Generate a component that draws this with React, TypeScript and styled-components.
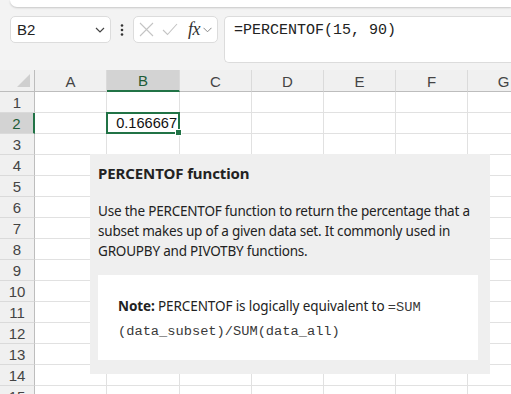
import React from "react";
import styled, { createGlobalStyle } from "styled-components";

const GlobalStyle = createGlobalStyle`
  html, body { margin: 0; padding: 0; background: #ffffff; }
  body { font-family: "Liberation Sans", Arial, sans-serif; }
`;

const GREEN = "#217346";
const COLS = ["A", "B", "C", "D", "E", "F", "G"];
const COL_W = [72, 73, 72, 72, 72, 72, 72];
const ROWS = Array.from({ length: 15 }, (_, i) => i + 1);

const Page = styled.div`
  position: relative;
  width: 511px;
  height: 394px;
  overflow: hidden;
  background: #f3f3f3;
`;

const TopStrip = styled.div`
  height: 7px;
  margin-left: 10px;
  background: #ffffff;
  border-bottom-left-radius: 7px;
  box-shadow: 0 1px 2px rgba(0, 0, 0, 0.18);
`;

const FormulaRow = styled.div`
  display: flex;
  align-items: flex-start;
  padding: 9px 0 0 10px;
  height: 63px;
  box-sizing: border-box;
`;

const NameBox = styled.div`
  box-sizing: border-box;
  width: 101px;
  height: 27px;
  background: #fff;
  border: 1px solid #dcdcdc;
  border-radius: 5px;
  display: flex;
  align-items: center;
  justify-content: space-between;
  padding: 0 5px 0 6px;
  font-size: 15px;
  color: #222;
`;

const Dots = styled.div`
  width: 22px;
  height: 27px;
  display: flex;
  align-items: center;
  justify-content: center;
`;

const FxBox = styled.div`
  box-sizing: border-box;
  width: 85px;
  height: 27px;
  background: #fff;
  border: 1px solid #dcdcdc;
  border-radius: 5px;
  display: flex;
  align-items: center;
  padding: 0 2px 0 5px;
  gap: 8px;
`;

const FxGlyph = styled.span`
  font-family: "Liberation Serif", "Times New Roman", serif;
  font-style: italic;
  font-size: 18px;
  color: #333;
  margin-left: 2px;
  letter-spacing: -0.5px;
`;

const FormulaBar = styled.div`
  box-sizing: border-box;
  margin-left: 6px;
  flex: 1;
  height: 47px;
  background: #fff;
  border: 1px solid #dcdcdc;
  border-right: none;
  border-radius: 5px 0 0 5px;
  padding: 4px 0 0 9px;
  font-family: "Liberation Mono", "Courier New", monospace;
  font-size: 15px;
  line-height: 20px;
  color: #222;
`;

const Sheet = styled.div`
  position: relative;
  display: grid;
  grid-template-columns: 35px ${COL_W.map((w) => `${w}px`).join(" ")};
  grid-auto-rows: 21px;
  grid-template-rows: 22px;
  background: #fff;
`;

const Corner = styled.div`
  position: relative;
  background: #f0f0f0;
  border-right: 1px solid #bdbdbd;
  border-bottom: 1px solid #bdbdbd;
`;

const ColHead = styled.div<{ $active?: boolean }>`
  box-sizing: border-box;
  display: flex;
  align-items: center;
  justify-content: center;
  background: ${(p) => (p.$active ? "#d3d3d3" : "#f0f0f0")};
  border-right: 1px solid #dadada;
  border-bottom: ${(p) => (p.$active ? `2px solid ${GREEN}` : "1px solid #bdbdbd")};
  font-size: 15px;
  color: ${(p) => (p.$active ? "#1d5c37" : "#444")};
  padding-top: 1px;
`;

const RowHead = styled.div<{ $active?: boolean }>`
  box-sizing: border-box;
  display: flex;
  align-items: center;
  justify-content: center;
  background: ${(p) => (p.$active ? "#d3d3d3" : "#f0f0f0")};
  border-right: ${(p) => (p.$active ? `2px solid ${GREEN}` : "1px solid #bdbdbd")};
  border-bottom: 1px solid #dadada;
  font-size: 15px;
  color: ${(p) => (p.$active ? "#1d5c37" : "#444")};
`;

const Cell = styled.div`
  box-sizing: border-box;
  border-right: 1px solid #e1e1e1;
  border-bottom: 1px solid #e1e1e1;
  display: flex;
  align-items: center;
  justify-content: flex-end;
  padding-right: 2px;
  font-size: 14.6px;
  color: #111;
`;

const Selection = styled.div`
  position: absolute;
  left: 106px;
  top: 42px;
  width: 74px;
  height: 22px;
  box-sizing: border-box;
  border: 2px solid ${GREEN};
  pointer-events: none;
`;

const Handle = styled.div`
  position: absolute;
  right: -4px;
  bottom: -4px;
  width: 5px;
  height: 5px;
  background: ${GREEN};
  border: 1px solid #fff;
`;

const Popup = styled.div`
  position: absolute;
  left: 90px;
  top: 154px;
  width: 400px;
  height: 220px;
  box-sizing: border-box;
  background: #efefef;
  padding: 8px 12px 15px 8px;
  font-family: "Noto Sans", "Open Sans", sans-serif;
  color: #222;
`;

const Title = styled.div`
  font-weight: 700;
  font-size: 15px;
  line-height: 22px;
  letter-spacing: -0.1px;
`;

const Body = styled.p`
  margin: 17px 0 0 0;
  font-size: 13.5px;
  line-height: 20px;
  letter-spacing: -0.2px;
`;

const NoteBox = styled.div`
  margin-top: 14px;
  background: #fff;
  height: 85px;
  box-sizing: border-box;
  padding: 20px 10px 0 20px;
  font-size: 13.5px;
  line-height: 22px;
  letter-spacing: -0.1px;
`;

const Mono = styled.span`
  font-family: "Liberation Mono", "Courier New", monospace;
  font-size: 13.7px;
  letter-spacing: 0;
  color: #3a3a3a;
`;

const Chevron = () => (
  <svg width="10" height="6" viewBox="0 0 10 6">
    <path d="M1 1 L5 5 L9 1" fill="none" stroke="#444" strokeWidth="1.2" />
  </svg>
);

export default function App() {
  return (
    <Page>
      <GlobalStyle />
      <TopStrip />
      <FormulaRow>
        <NameBox>
          <span>B2</span>
          <Chevron />
        </NameBox>
        <Dots>
          <svg width="4" height="12" viewBox="0 0 4 12">
            <circle cx="2" cy="1.5" r="1.3" fill="#333" />
            <circle cx="2" cy="6" r="1.3" fill="#333" />
            <circle cx="2" cy="10.5" r="1.3" fill="#333" />
          </svg>
        </Dots>
        <FxBox>
          <svg width="15" height="15" viewBox="0 0 15 15">
            <path d="M1 1 L14 14 M14 1 L1 14" stroke="#c4c4c4" strokeWidth="1.1" fill="none" />
          </svg>
          <svg width="16" height="13" viewBox="0 0 16 13">
            <path d="M1 7 L5.5 11.5 L15 1" stroke="#c4c4c4" strokeWidth="1.1" fill="none" />
          </svg>
          <FxGlyph>fx</FxGlyph>
          <svg width="9" height="6" viewBox="0 0 9 6" style={{ marginLeft: -5 }}>
            <path d="M0.5 0.8 L4.5 4.8 L8.5 0.8" fill="none" stroke="#888" strokeWidth="1" />
          </svg>
        </FxBox>
        <FormulaBar>=PERCENTOF(15, 90)</FormulaBar>
      </FormulaRow>
      <Sheet>
        <Corner>
          <svg width="14" height="14" viewBox="0 0 14 14" style={{ position: "absolute", right: 3, bottom: 3 }}>
            <path d="M13 0 L13 13 L0 13 Z" fill="#cfcfcf" />
          </svg>
        </Corner>
        {COLS.map((c) => (
          <ColHead key={c} $active={c === "B"}>
            {c}
          </ColHead>
        ))}
        {ROWS.map((r) => (
          <React.Fragment key={r}>
            <RowHead $active={r === 2}>{r}</RowHead>
            {COLS.map((c) => (
              <Cell key={c}>{r === 2 && c === "B" ? "0.166667" : ""}</Cell>
            ))}
          </React.Fragment>
        ))}
        <Selection>
          <Handle />
        </Selection>
      </Sheet>
      <Popup>
        <Title>PERCENTOF function</Title>
        <Body>
          Use the PERCENTOF function to return the percentage that a subset makes up of a given data set. It
          commonly used in GROUPBY and PIVOTBY functions.
        </Body>
        <NoteBox>
          <b>Note:</b> PERCENTOF is logically equivalent to <Mono>=SUM</Mono>
          <br />
          <Mono>(data_subset)/SUM(data_all)</Mono>
        </NoteBox>
      </Popup>
    </Page>
  );
}
